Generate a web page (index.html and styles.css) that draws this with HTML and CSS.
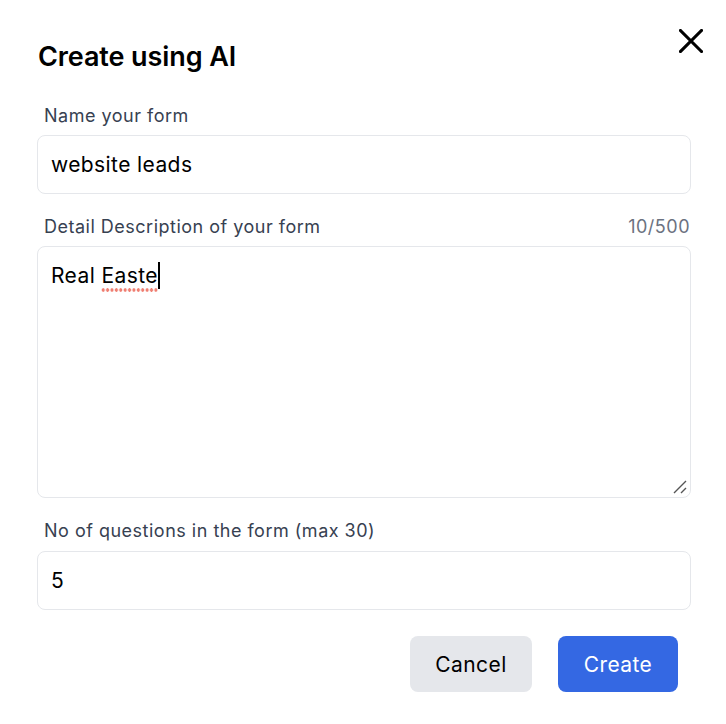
FILE: index.html
```html
<!DOCTYPE html>
<html lang="en">
<head>
<meta charset="utf-8">
<title>Create using AI</title>
<link rel="stylesheet" href="styles.css">
</head>
<body>
<div class="dialog">
  <div class="header">
    <h1 class="title">Create using AI</h1>
    <button class="close" aria-label="Close">
      <svg width="24" height="24" viewBox="0 0 24 24"><path d="M1.5 1.5 L22.5 22.5 M22.5 1.5 L1.5 22.5" stroke="#000" stroke-width="3.1" stroke-linecap="square" fill="none"/></svg>
    </button>
  </div>

  <div class="field">
    <div class="label-row"><span class="label">Name your form</span></div>
    <div class="input">website leads</div>
  </div>

  <div class="field">
    <div class="label-row"><span class="label">Detail Description of your form</span><span class="count">10/500</span></div>
    <div class="textarea">
      <span class="text">Real <span class="misspelled">Easte</span><span class="caret"></span></span>
      <svg class="grip" width="16" height="16" viewBox="0 0 16 16"><path d="M2 14 L14 2 M9 14 L14 9" stroke="#555" stroke-width="1.4" fill="none"/></svg>
    </div>
  </div>

  <div class="field field-last">
    <div class="label-row"><span class="label">No of questions in the form (max 30)</span></div>
    <div class="input">5</div>
  </div>

  <div class="actions">
    <button class="btn cancel">Cancel</button>
    <button class="btn create">Create</button>
  </div>
</div>
</body>
</html>
```

FILE: styles.css
```css
* { box-sizing: border-box; }
html, body { margin: 0; padding: 0; background: #fff; }
body {
  font-family: Inter, "Noto Sans", "Liberation Sans", sans-serif;
  color: #000;
}
.dialog {
  width: 726px;
  padding: 29px 35px 0 37px;
}
.header {
  display: flex;
  justify-content: space-between;
  align-items: flex-start;
}
.title {
  margin: 12px 0 0 1px;
  font-size: 27px;
  line-height: 32px;
  font-weight: 600;
  letter-spacing: -0.1px;
}
.close {
  border: 0;
  background: none;
  padding: 0;
  margin-right: -12px;
  width: 24px;
  height: 24px;
  cursor: pointer;
}
.close svg { display: block; }
.field { margin-top: 21px; }
.header + .field { margin-top: 31px; }
.label-row {
  display: flex;
  justify-content: space-between;
  align-items: baseline;
  padding: 0 1px 0 7px;
  margin-bottom: 7px;
  font-size: 18px;
  line-height: 24px;
  letter-spacing: 0.5px;
}
.label { color: #374151; }
.count { color: #6b7280; }
.input, .textarea {
  border: 1px solid #e5e7eb;
  border-radius: 8px;
  font-size: 21px;
  letter-spacing: 0.4px;
  padding: 0 14px 0 13px;
}
.input {
  height: 59px;
  display: flex;
  align-items: center;
}
.textarea {
  position: relative;
  height: 252px;
  padding-top: 15px;
  line-height: 28px;
}
.misspelled {
  background-image: radial-gradient(circle, #ef7f72 1.5px, transparent 1.9px);
  background-size: 4.4px 4px;
  background-repeat: repeat-x;
  background-position: 0 100%;
  padding-bottom: 4px;
}
.caret {
  display: inline-block;
  width: 2px;
  height: 27px;
  background: #000;
  vertical-align: -6px;
}
.grip {
  position: absolute;
  right: 2px;
  bottom: 2px;
}
.field-last .label-row { margin-bottom: 8px; }
.actions {
  display: flex;
  justify-content: flex-end;
  gap: 26px;
  margin-top: 26px;
  padding-right: 13px;
}
.btn {
  height: 56px;
  border: 0;
  border-radius: 8px;
  font-family: inherit;
  font-size: 21px;
  letter-spacing: 0.4px;
  cursor: pointer;
}
.cancel {
  width: 122px;
  background: #e5e7eb;
  color: #000;
}
.create {
  width: 120px;
  background: #3468e3;
  color: #fff;
}
```
